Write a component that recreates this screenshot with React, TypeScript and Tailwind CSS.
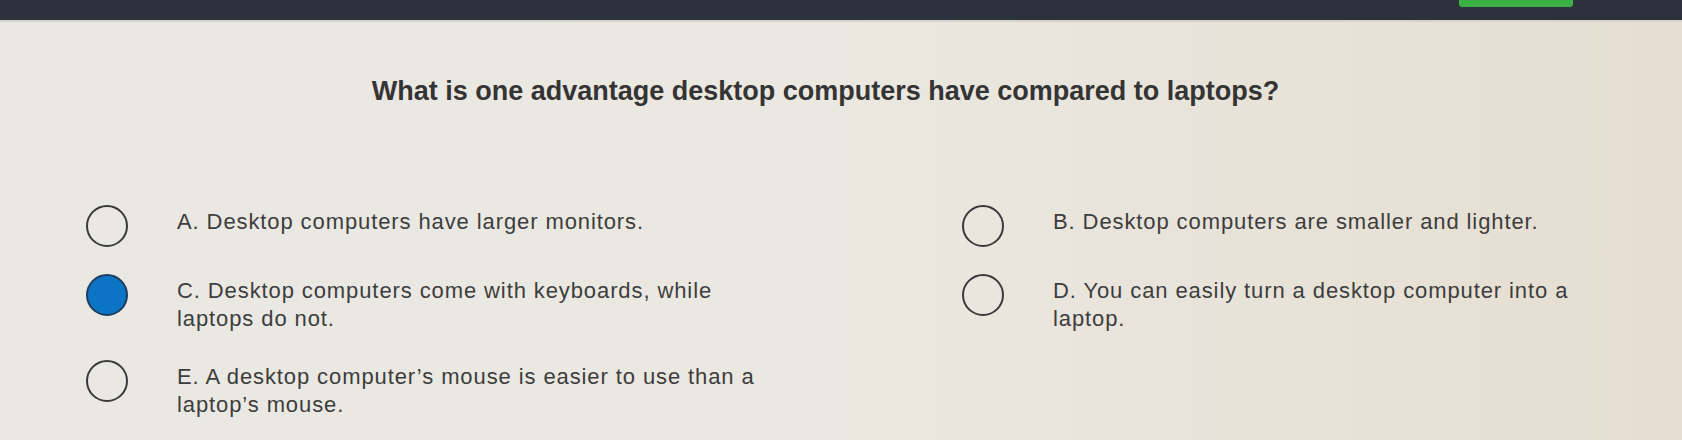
import React from 'react'

interface Choice {
  id: string
  text: string
  selected?: boolean
  right?: boolean
}

const choices: Choice[] = [
  { id: 'A', text: 'A. Desktop computers have larger monitors.' },
  { id: 'B', text: 'B. Desktop computers are smaller and lighter.', right: true },
  { id: 'C', text: 'C. Desktop computers come with keyboards, while laptops do not.', selected: true },
  { id: 'D', text: 'D. You can easily turn a desktop computer into a laptop.', right: true },
  { id: 'E', text: 'E. A desktop computer\u2019s mouse is easier to use than a laptop\u2019s mouse.' },
]

function Radio({ selected }: { selected?: boolean }) {
  return (
    <div
      className={
        selected
          ? 'w-[42px] h-[42px] shrink-0 rounded-full border-2 border-[#1d3e5e] bg-[#0b74c4]'
          : 'w-[42px] h-[42px] shrink-0 rounded-full border-[2.5px] border-[#3a3a3a]'
      }
    />
  )
}

function ChoiceRow({ choice }: { choice: Choice }) {
  return (
    <div className="flex items-start gap-[49px]">
      <Radio selected={choice.selected} />
      <p
        className={
          choice.right
            ? 'pt-[3px] w-[560px] text-[22px] leading-[28px] tracking-[0.9px] text-[#3d3d3d]'
            : 'pt-[3px] w-[598px] text-[22px] leading-[28px] tracking-[0.9px] text-[#3d3d3d]'
        }
      >
        {choice.text}
      </p>
    </div>
  )
}

export default function App() {
  return (
    <div
      className="h-[440px] w-full overflow-hidden bg-gradient-to-r from-[#e9e8e3] via-[#ebe8e1] to-[#e5ded1]"
      style={{ fontFamily: '"Liberation Sans", Arial, sans-serif' }}
    >
      <div className="h-[20px] bg-[#2b323c] flex justify-end pr-[109px]">
        <div className="w-[114px] h-[7px] rounded-b-[3px] bg-[#3bb044]" />
      </div>
      <div className="h-[2px] bg-[#d6d3cc]" />

      <h1 className="mt-[53px] pr-[31px] text-center text-[27px] leading-[32px] font-bold text-[#343434]">
        What is one advantage desktop computers have compared to laptops?
      </h1>

      <div className="mt-[98px] pl-[86px] grid grid-cols-[876px_1fr] gap-y-[27px]">
        {choices.map((c) => (
          <ChoiceRow key={c.id} choice={c} />
        ))}
      </div>
    </div>
  )
}
